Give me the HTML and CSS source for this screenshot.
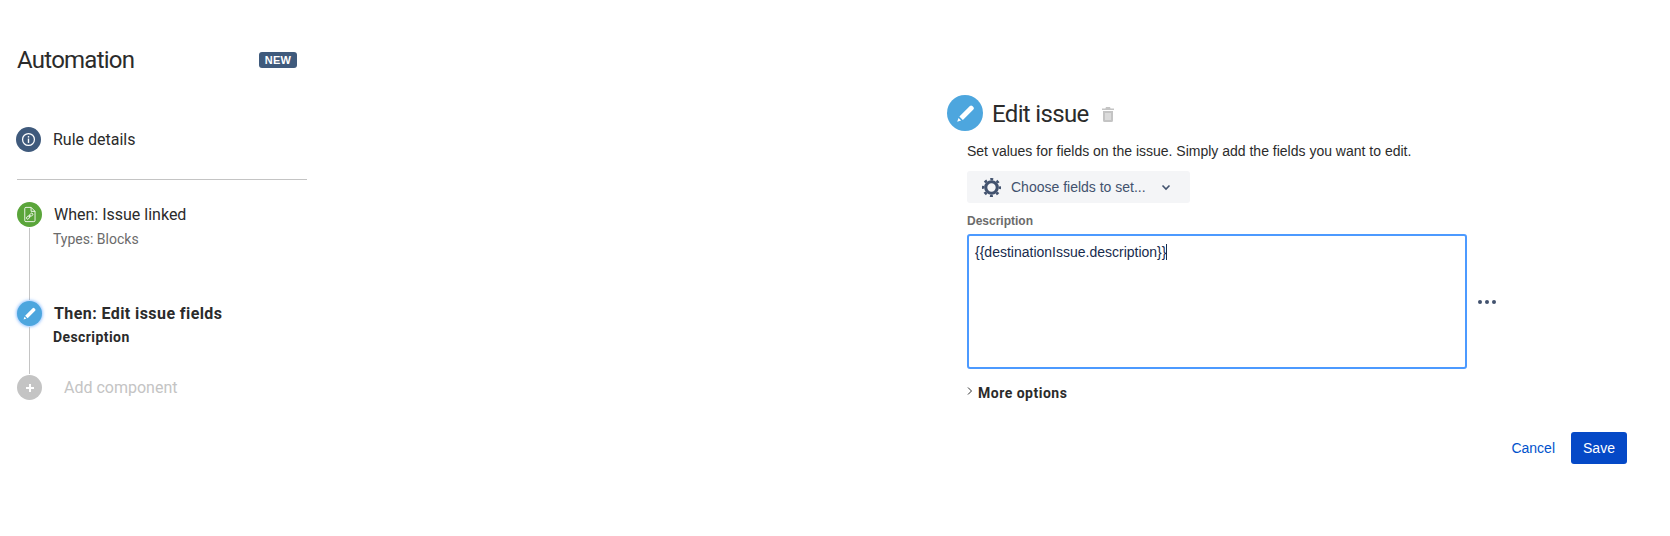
FILE: index.html
```html
<!DOCTYPE html>
<html lang="en">
<head>
<meta charset="utf-8">
<title>Automation</title>
<link rel="stylesheet" href="styles.css">
</head>
<body>
<div class="page">
  <aside class="side">
    <div class="brand"><h1>Automation</h1><span class="badge">NEW</span></div>
    <div class="details">
      <span class="dot navy"><svg viewBox="0 0 24 24" width="15" height="15"><circle cx="12" cy="12" r="9.5" fill="none" stroke="#fff" stroke-width="2"/><rect x="10.9" y="10.5" width="2.2" height="7" fill="#fff"/><rect x="10.9" y="6.5" width="2.2" height="2.4" fill="#fff"/></svg></span>
      <span class="details-label">Rule details</span>
    </div>
    <hr class="rule">
    <div class="timeline">
      <div class="step step-when">
        <span class="dot green"><svg viewBox="0 0 24 24" width="19" height="19" fill="none" stroke="#fff" stroke-width="1.1"><path d="M6 4.500A1.500 1.500 0 0 1 7.500 3H14l5 5v11.500a1.500 1.500 0 0 1-1.500 1.500h-10A1.500 1.500 0 0 1 6 19.500z"/><path d="M14 3v5h5"/><path d="M10.500 15.500l3-3"/><rect x="8" y="14.500" width="4.500" height="3" rx="1.500" transform="rotate(-45 10 16)"/><rect x="12" y="11" width="4.500" height="3" rx="1.500" transform="rotate(-45 14 12.500)"/></svg></span>
        <div class="step-text"><div class="step-title">When: Issue linked</div><div class="step-sub">Types: Blocks</div></div>
      </div>
      <div class="step step-then">
        <span class="dot blue glow"><svg viewBox="0 0 24 24" width="15" height="15"><path fill="#fff" d="M17 3.500a2 2 0 0 1 2.800 0l1.200 1.200a2 2 0 0 1 0 2.800L9 19.500l-4 -4zM4 17l3 3-4.500 1.500z"/></svg></span>
        <div class="step-text"><div class="step-title bold">Then: Edit issue fields</div><div class="step-sub bold dark">Description</div></div>
      </div>
      <div class="step step-add">
        <span class="dot grey"><svg viewBox="0 0 24 24" width="12" height="12"><path fill="#fff" d="M10 4h4v6h6v4h-6v6h-4v-6H4v-4h6z"/></svg></span>
        <span class="add-label">Add component</span>
      </div>
    </div>
  </aside>
  <main class="panel">
    <div class="panel-head">
      <span class="dot blue large"><svg viewBox="0 0 24 24" width="21" height="21"><path fill="#fff" d="M17 3.500a2 2 0 0 1 2.800 0l1.200 1.200a2 2 0 0 1 0 2.800L9 19.500l-4 -4zM4 17l3 3-4.500 1.500z"/></svg></span>
      <h2>Edit issue</h2>
      <svg class="trash" viewBox="0 0 12 15" width="12" height="15"><path fill="#c4c4c4" d="M4 0h4l.6 1.500H12V3H0V1.500h3.400zM1 4h10v9.500A1.500 1.500 0 0 1 9.500 15h-7A1.500 1.500 0 0 1 1 13.500z"/><path stroke="#fff" stroke-width=".8" d="M4 6v7M6 6v7M8 6v7"/></svg>
    </div>
    <div class="body">
      <p class="hint">Set values for fields on the issue. Simply add the fields you want to edit.</p>
      <button class="choose" type="button">
        <svg viewBox="0 0 24 24" width="21" height="21" fill="none" stroke="#42526e"><circle cx="12" cy="12" r="6.600" stroke-width="3.600"/><circle cx="12" cy="12" r="9.600" stroke-width="2.600" stroke-dasharray="3.400 4.140" stroke-dashoffset="1.700"/></svg>
        <span>Choose fields to set...</span>
        <svg viewBox="0 0 12 12" width="12" height="12"><path fill="none" stroke="#42526e" stroke-width="1.600" d="M2.500 4.500L6 8l3.500-3.500"/></svg>
      </button>
      <label class="label">Description</label>
      <div class="field-row">
        <div class="textarea">{{destinationIssue.description}}<span class="caret"></span></div>
        <div class="more"><i></i><i></i><i></i></div>
      </div>
      <div class="options">
        <svg viewBox="0 0 8 10" width="8" height="10"><path fill="none" stroke="#333" stroke-width="1" d="M2 1.500L5.500 5 2 8.500"/></svg>
        <span>More options</span>
      </div>
    </div>
    <div class="actions">
      <a class="cancel">Cancel</a>
      <button class="save" type="button">Save</button>
    </div>
  </main>
</div>
</body>
</html>
```
FILE: styles.css
```css
* { box-sizing: border-box; }
html, body { margin: 0; padding: 0; background: #fff; }
body { width: 1670px; height: 536px; overflow: hidden; font-family: "Liberation Sans", Arial, sans-serif; color: #2b2b2b; }
.page { display: flex; height: 100%; }
.side { width: 291px; margin-left: 16px; padding-top: 46px; font-family: Roboto, sans-serif; flex: none; }
.brand { display: flex; align-items: center; justify-content: space-between; height: 28px; padding: 0 10px 0 1px; }
.brand h1 { margin: 0; font-size: 24px; font-weight: 400; line-height: 28px; letter-spacing: -.75px; }
.badge { background: #3f5a7c; color: #fff; font: 700 11px/16px "Liberation Sans", sans-serif; letter-spacing: .3px; width: 38px; height: 16px; border-radius: 3px; text-align: center; }
.details { display: flex; align-items: center; margin-top: 53px; height: 25px; }
.details-label { font-size: 16px; margin-left: 12px; }
.dot { width: 25px; height: 25px; border-radius: 50%; display: flex; align-items: center; justify-content: center; flex: none; }
.navy { background: #3f5a7c; }
.green { background: #5aa53a; }
.blue { background: #4da6de; }
.grey { background: #c4c4c4; }
.glow { box-shadow: 0 0 3px 1px rgba(76,154,255,.55); }
.rule { border: 0; border-top: 1px solid #c4c4c4; margin: 27px 0 22px 1px; }
.timeline { padding-left: 1px; position: relative; }
.step { display: flex; align-items: flex-start; position: relative; }
.step-when { height: 99px; }
.step-then { height: 74px; }
.step-add { height: 25px; align-items: center; }
.step-when::after, .step-then::after { content: ""; position: absolute; left: 12px; top: 26px; bottom: 1px; width: 1px; background: #c4c4c4; }
.step-text { margin-left: 12px; padding-top: 3px; }
.step-title { font-size: 16px; line-height: 20px; }
.step-sub { font-size: 14px; line-height: 18px; margin: 5px 0 0 -1px; color: #6b6b6b; }
.bold { font-weight: 700; letter-spacing: .42px; }
.step-sub.bold { margin-top: 4px; }
.dark { color: #2b2b2b; }
.add-label { margin-left: 22px; font-size: 16px; color: #c4c4c4; }
.panel { width: 680px; margin-left: 640px; padding-top: 95px; position: relative; flex: none; }
.panel-head { display: flex; align-items: center; height: 36px; }
.large { width: 36px; height: 36px; }
.panel-head h2 { margin: 1px 0 0 9px; font: 400 24px/36px Roboto, sans-serif; letter-spacing: -.65px; }
.trash { margin: 2px 0 0 13px; }
.body { padding-left: 20px; }
.hint { margin: 11px 0 0; font-size: 14px; line-height: 18px; color: #2b2b2b; }
.choose { display: flex; align-items: center; width: 223px; height: 32px; margin-top: 11px; padding: 0 0 0 14px; border: 0; border-radius: 3px; background: #f4f5f7; color: #42526e; font: 14px "Liberation Sans", sans-serif; }
.choose span { margin: 0 14px 0 9px; }
.label { display: block; margin-top: 11px; font-size: 12px; line-height: 14px; font-weight: 700; color: #6b6b6b; }
.field-row { display: flex; align-items: center; margin-top: 6px; }
.textarea { width: 500px; height: 135px; padding: 7px 6px; border: 2px solid #4c9aff; border-radius: 3px; font-size: 14px; line-height: 18px; color: #172b4d; }
.caret { display: inline-block; width: 1px; height: 16px; background: #172b4d; vertical-align: -3px; }
.more { display: flex; gap: 3px; margin-left: 11px; }
.more i { width: 4px; height: 4px; border-radius: 50%; background: #42526e; }
.options { display: flex; align-items: center; margin-top: 15px; font-family: Roboto, sans-serif; font-weight: 700; font-size: 14px; line-height: 18px; letter-spacing: .5px; }
.options svg { margin: -4px 4px 0 -1px; }
.actions { display: flex; align-items: center; justify-content: flex-end; gap: 16px; margin-top: 30px; padding-right: 0; }
.cancel { color: #0052cc; font-size: 14px; }
.save { width: 56px; height: 32px; border: 0; border-radius: 3px; background: #0549c7; color: #fff; font: 14px "Liberation Sans", sans-serif; }
```
